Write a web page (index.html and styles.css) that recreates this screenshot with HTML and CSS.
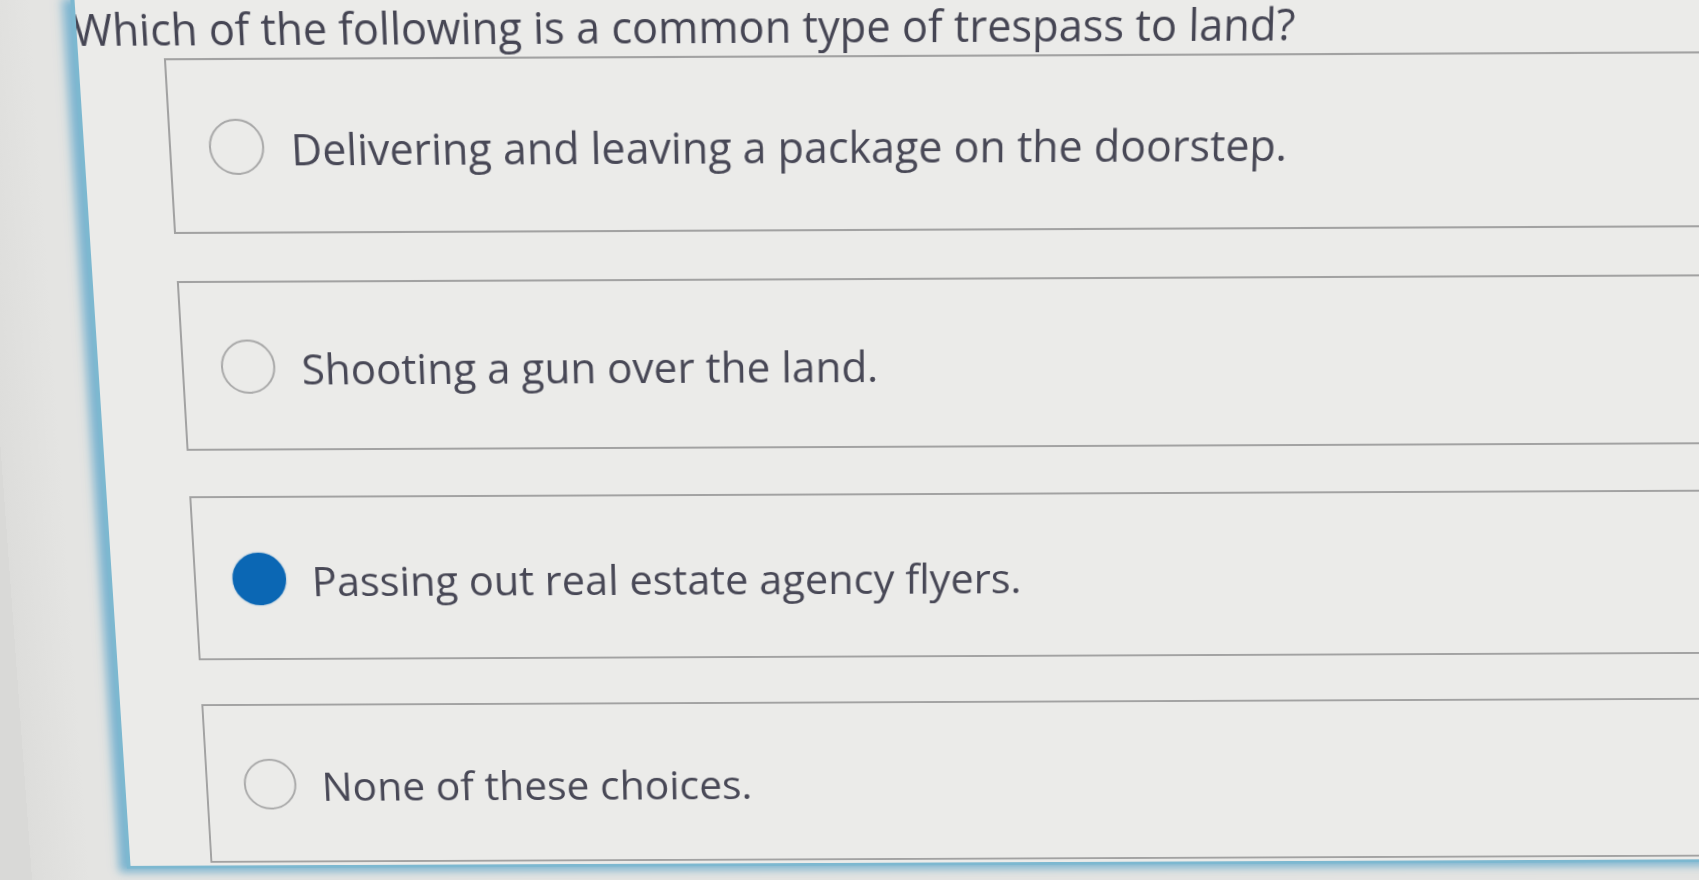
FILE: index.html
```html
<!DOCTYPE html>
<html lang="en">
<head>
    <meta charset="UTF-8">
    <meta name="viewport" content="width=device-width, initial-scale=1.0">
    <title>Quiz - Question</title>
    <link rel="stylesheet" href="styles.css">
</head>
<body>

    <div class="screen">
        <!-- Question panel -->
        <div class="quiz-panel">
            <div class="question-text">Which of the following is a common type of trespass to land?</div>

            <div class="answers">
                <label class="answer">
                    <span class="radio"></span>
                    <span class="answer-text">Delivering and leaving a package on the doorstep.</span>
                </label>

                <label class="answer">
                    <span class="radio"></span>
                    <span class="answer-text">Shooting a gun over the land.</span>
                </label>

                <label class="answer">
                    <span class="radio checked"></span>
                    <span class="answer-text">Passing out real estate agency flyers.</span>
                </label>

                <label class="answer">
                    <span class="radio"></span>
                    <span class="answer-text">None of these choices.</span>
                </label>
            </div>
        </div>
    </div>

</body>
</html>
```

FILE: styles.css
```css
/* Page background around the quiz panel */
body {
    margin: 0;
    font-family: "Open Sans", "Noto Sans", Arial, sans-serif;
    background-color: #d9d9d7;
    overflow: hidden;
    height: 880px;
}

/* The screen is seen at a slight angle, top edge closer */
.screen {
    width: 1900px;
    height: 940px;
    padding-left: 103px;
    box-sizing: border-box;
    background: linear-gradient(to right, #dddddb 0, #e4e4e2 60px, #e4e4e2 100%);
    transform-origin: 850px 440px;
    transform: perspective(1500px) rotateX(-6.9deg) rotate(-0.25deg);
}

/* Main panel with the blue edge glow */
.quiz-panel {
    height: 881px;
    background-color: #ebebe9;
    overflow: hidden;
    box-shadow: -4px 3px 0 #7db8d0, -12px 7px 9px rgba(80, 160, 200, 0.7);
}

.question-text {
    font-size: 42px;
    line-height: 42px;
    padding: 15px 0 7px 0;
    margin-left: -4px;
    color: #454553;
    white-space: nowrap;
}

/* Stack of answer boxes */
.answers {
    display: flex;
    flex-direction: column;
    gap: 46px;
    margin-left: 83px;
}

.answer {
    display: flex;
    align-items: center;
    height: 169px;
    border: 2px solid #a2a2a2;
    border-right: none;
    box-sizing: border-box;
    padding-left: 37px;
}

.radio {
    width: 54px;
    height: 54px;
    border: 2px solid #a9a9a9;
    border-radius: 50%;
    box-sizing: border-box;
    flex-shrink: 0;
}

/* Selected answer */
.radio.checked {
    background-color: #0b67b4;
    border-color: #0b67b4;
    box-shadow: 0 0 2px rgba(11, 103, 180, 0.6);
}

.answer-text {
    margin-left: 26px;
    padding-top: 4px;
    font-size: 42px;
    color: #484856;
    white-space: nowrap;
}
```
